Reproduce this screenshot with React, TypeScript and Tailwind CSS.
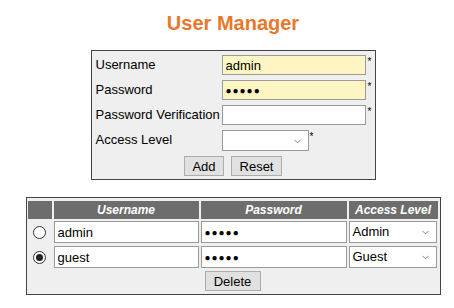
import { ChevronDown } from "lucide-react";

const font = { fontFamily: '"Liberation Sans", Arial, sans-serif' };
const dots = "●●●●●";

function Field({ value, masked = false, yellow = false }: { value: string; masked?: boolean; yellow?: boolean }) {
    return (
        <input
            type="text"
            readOnly
            value={value}
            className={`w-[144px] h-[20px] px-[3px] text-black border border-[#9a9a9a] outline-none ${masked ? "text-[10px] tracking-[1px]" : "text-[13px]"} ${yellow ? "bg-[#fdf6c3]" : "bg-white"}`}
        />
    );
}

function Select({ value, width }: { value: string; width: string }) {
    return (
        <div className={`relative h-[21px] bg-white border border-[#9a9a9a] flex items-center ${width}`}>
            <span className="pl-[3px] text-[13px] text-black">{value}</span>
            <ChevronDown className="absolute right-[5px] top-[5px] w-[11px] h-[11px] text-[#555]" strokeWidth={1.5} />
        </div>
    );
}

function Radio({ checked }: { checked?: boolean }) {
    return (
        <div className="w-[13px] h-[13px] rounded-full border border-[#333] bg-white flex items-center justify-center">
            {checked && <div className="w-[7px] h-[7px] rounded-full bg-[#222]" />}
        </div>
    );
}

function Btn({ label, width }: { label: string; width: string }) {
    return (
        <button className={`h-[20px] ${width} bg-[#e1e1e1] border border-[#adadad] text-[13px] text-black leading-none`}>
            {label}
        </button>
    );
}

export default function App() {
    const rows = [
        { name: "admin", level: "Admin", checked: false },
        { name: "guest", level: "Guest", checked: true },
    ];

    return (
        <div className="w-[454px] h-[308px] bg-white pl-[12px] flex flex-col items-center" style={font}>
            <h1 className="mt-[11px] text-[20px] leading-[24px] font-bold text-[#e8782b]">User Manager</h1>

            {/* add user form */}
            <div className="mt-[15px] w-[285px] border border-[#444] bg-[#efefef] pl-[4px] pt-[4px]">
                <div className="grid grid-cols-[126px_144px_8px] auto-rows-[25px] items-start text-[13px] text-black">
                    <span className="leading-[20px]">Username</span>
                    <Field value="admin" yellow />
                    <span className="text-[10px] leading-[14px] pl-[2px]">*</span>

                    <span className="leading-[20px]">Password</span>
                    <Field value={dots} masked yellow />
                    <span className="text-[10px] leading-[14px] pl-[2px]">*</span>

                    <span className="leading-[20px]">Password Verification</span>
                    <Field value="" />
                    <span className="text-[10px] leading-[14px] pl-[2px]">*</span>

                    <span className="leading-[20px]">Access Level</span>
                    <div className="flex items-start">
                        <Select value="" width="w-[87px]" />
                        <span className="text-[10px] leading-[14px] pl-[1px]">*</span>
                    </div>
                    <span />
                </div>
                <div className="flex justify-center gap-[7px] pr-[4px] pt-[1px] pb-[3px]">
                    <Btn label="Add" width="w-[40px]" />
                    <Btn label="Reset" width="w-[51px]" />
                </div>
            </div>

            {/* user list */}
            <div className="mt-[17px] w-[415px] border border-[#444] bg-[#efefef] pl-[1px] pr-[2px] pt-[3px] pb-[3px]">
                <div className="grid grid-cols-[24px_145px_146px_89px] gap-x-[2px]">
                    <div className="h-[18px] bg-[#6d6d6d]" />
                    <div className="h-[18px] bg-[#6d6d6d] text-white text-[12px] font-bold italic text-center leading-[18px]">Username</div>
                    <div className="h-[18px] bg-[#6d6d6d] text-white text-[12px] font-bold italic text-center leading-[18px]">Password</div>
                    <div className="h-[18px] bg-[#6d6d6d] text-white text-[12px] font-bold italic text-center leading-[18px]">Access Level</div>

                    {rows.map((r, i) => (
                        <div key={r.name} className="contents">
                            <div className={`flex items-center justify-center h-[22px] ${i === 0 ? "mt-[2px]" : "mt-[3px]"}`}>
                                <Radio checked={r.checked} />
                            </div>
                            <input
                                readOnly
                                value={r.name}
                                className={`h-[22px] w-full px-[3px] bg-white border border-[#9a9a9a] text-[13px] text-black outline-none ${i === 0 ? "mt-[2px]" : "mt-[3px]"}`}
                            />
                            <input
                                readOnly
                                value={dots}
                                className={`h-[22px] w-full px-[3px] bg-white border border-[#9a9a9a] text-[10px] tracking-[1px] text-black outline-none ${i === 0 ? "mt-[2px]" : "mt-[3px]"}`}
                            />
                            <div className={i === 0 ? "mt-[2px]" : "mt-[3px]"}>
                                <Select value={r.level} width="w-[88px] h-[22px]" />
                            </div>
                        </div>
                    ))}
                </div>
                <div className="flex justify-center pt-[3px]">
                    <Btn label="Delete" width="w-[56px]" />
                </div>
            </div>
        </div>
    );
}
